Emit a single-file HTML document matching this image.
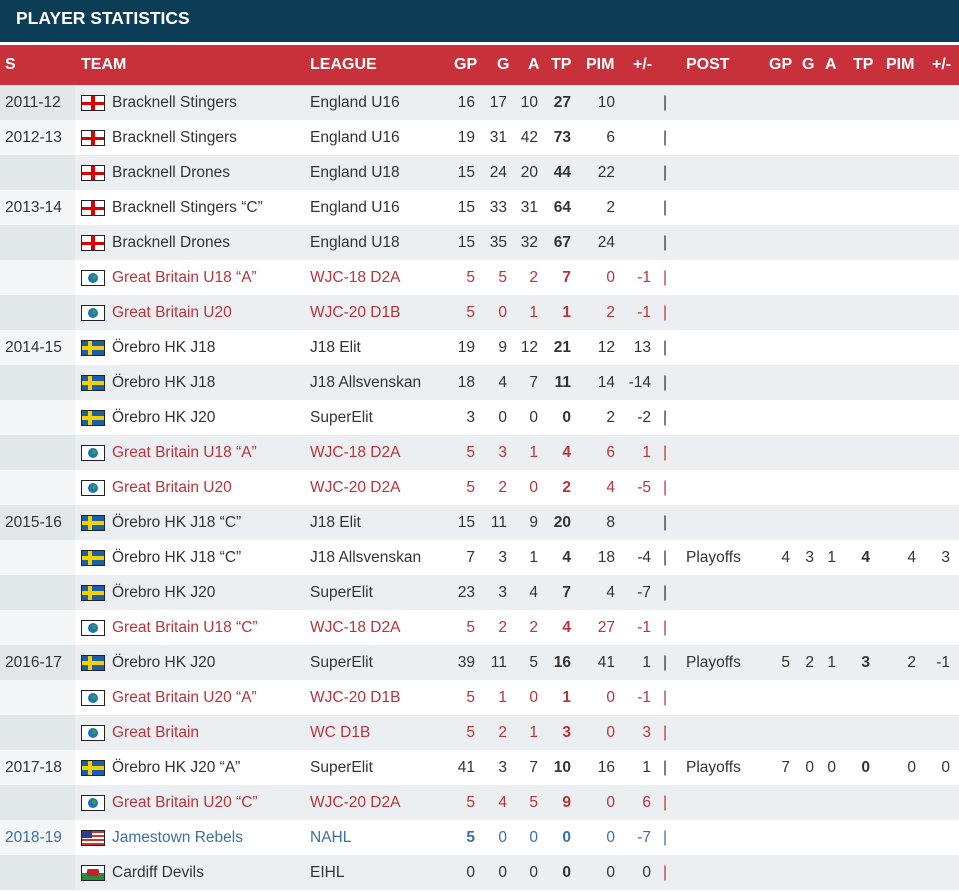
<!DOCTYPE html>
<html><head><meta charset="utf-8"><style>
*{margin:0;padding:0;box-sizing:border-box}
body{width:959px;height:878px;overflow:hidden;background:#fff;font-family:"Liberation Sans",sans-serif;font-size:15.5px;color:#333}
.top{height:42px;background:#0b3d56;color:#fff;font-weight:bold;font-size:17.5px;padding-left:16px;line-height:36px}
.hd{position:absolute;top:45px;left:0;width:959px;height:40px;background:#c8313a;color:#fff;font-weight:bold;font-size:16px}
.hd span{position:absolute;top:0;line-height:40px}
.r{position:absolute;left:0;width:959px;height:35px;line-height:36px}
.r span{position:absolute;top:0;white-space:nowrap}
.g{background:#ebeff2}.g .s{background:#e2e7ea}
.w{background:#fff}.w .s{background:#f4f5f6}
.s{left:0!important;width:75px;height:35px;padding-left:5px}
.t{left:112px}.l{left:310px}
.a{right:484px}.b{right:452px}.c{right:421px}.d{right:388px;font-weight:bold}.e{right:344px}.h{right:308px}.p{left:663px}
.po{left:686px}.pa{right:169px}.pb{right:145px}.pc{right:123px}.pd{right:89px;font-weight:bold}.pe{right:43px}.ph{right:9px}
.fl{position:absolute;left:81px;top:10px;width:24px;height:16px;border:1px solid #222;overflow:hidden}
.en{background:linear-gradient(#fff 6px,#d00 6px,#d00 9px,#fff 9px)}
.en:after{content:"";position:absolute;left:9px;top:0;width:4px;height:14px;background:#d00}
.se{background:#1b5fa8}
.se:before{content:"";position:absolute;left:0;top:5px;width:22px;height:4px;background:#f5d100}
.se:after{content:"";position:absolute;left:6px;top:0;width:4px;height:14px;background:#f5d100}
.wo{background:#fff}
.wo:after{content:"";position:absolute;left:6px;top:2px;width:10px;height:10px;border-radius:50%;background:radial-gradient(circle at 60% 40%,#3a9a4a 25%,#1e72c0 30%)}
.us{background:repeating-linear-gradient(#c33 0 2px,#fff 2px 4px)}
.us:after{content:"";position:absolute;left:0;top:0;width:10px;height:7px;background:#2c3f8a}
.wa{background:linear-gradient(#fff 7px,#2a8c3a 7px)}
.wa:after{content:"";position:absolute;left:5px;top:3px;width:12px;height:7px;background:#c8202a;border-radius:2px}
.red,.red span{color:#b9343b}.blu,.blu span{color:#3d6fa3}
</style></head><body>
<div class="top">PLAYER STATISTICS</div>
<div class="hd">
<span style="left:5px">S</span><span style="left:81px">TEAM</span><span style="left:310px">LEAGUE</span>
<span style="left:454px">GP</span><span style="left:497px">G</span><span style="left:528px">A</span><span style="left:551px">TP</span><span style="left:586px">PIM</span><span style="left:633px">+/-</span>
<span style="left:686px">POST</span><span style="left:769px">GP</span><span style="left:802px">G</span><span style="left:825px">A</span><span style="left:853px">TP</span><span style="left:886px">PIM</span><span style="left:932px">+/-</span>
</div>

<div class="r g" style="top:85px"><span class="s">2011-12</span><i class="fl en"></i><span class="t">Bracknell Stingers</span><span class="l">England U16</span><span class="a">16</span><span class="b">17</span><span class="c">10</span><span class="d">27</span><span class="e">10</span><span class="h"></span><span class="p">|</span></div>
<div class="r w" style="top:120px"><span class="s">2012-13</span><i class="fl en"></i><span class="t">Bracknell Stingers</span><span class="l">England U16</span><span class="a">19</span><span class="b">31</span><span class="c">42</span><span class="d">73</span><span class="e">6</span><span class="p">|</span></div>
<div class="r g" style="top:155px"><span class="s"></span><i class="fl en"></i><span class="t">Bracknell Drones</span><span class="l">England U18</span><span class="a">15</span><span class="b">24</span><span class="c">20</span><span class="d">44</span><span class="e">22</span><span class="p">|</span></div>
<div class="r w" style="top:190px"><span class="s">2013-14</span><i class="fl en"></i><span class="t">Bracknell Stingers “C”</span><span class="l">England U16</span><span class="a">15</span><span class="b">33</span><span class="c">31</span><span class="d">64</span><span class="e">2</span><span class="p">|</span></div>
<div class="r g" style="top:225px"><span class="s"></span><i class="fl en"></i><span class="t">Bracknell Drones</span><span class="l">England U18</span><span class="a">15</span><span class="b">35</span><span class="c">32</span><span class="d">67</span><span class="e">24</span><span class="p">|</span></div>
<div class="r w red" style="top:260px"><span class="s"></span><i class="fl wo"></i><span class="t">Great Britain U18 “A”</span><span class="l">WJC-18 D2A</span><span class="a">5</span><span class="b">5</span><span class="c">2</span><span class="d">7</span><span class="e">0</span><span class="h">-1</span><span class="p">|</span></div>
<div class="r g red" style="top:295px"><span class="s"></span><i class="fl wo"></i><span class="t">Great Britain U20</span><span class="l">WJC-20 D1B</span><span class="a">5</span><span class="b">0</span><span class="c">1</span><span class="d">1</span><span class="e">2</span><span class="h">-1</span><span class="p">|</span></div>
<div class="r w" style="top:330px"><span class="s">2014-15</span><i class="fl se"></i><span class="t">Örebro HK J18</span><span class="l">J18 Elit</span><span class="a">19</span><span class="b">9</span><span class="c">12</span><span class="d">21</span><span class="e">12</span><span class="h">13</span><span class="p">|</span></div>
<div class="r g" style="top:365px"><span class="s"></span><i class="fl se"></i><span class="t">Örebro HK J18</span><span class="l">J18 Allsvenskan</span><span class="a">18</span><span class="b">4</span><span class="c">7</span><span class="d">11</span><span class="e">14</span><span class="h">-14</span><span class="p">|</span></div>
<div class="r w" style="top:400px"><span class="s"></span><i class="fl se"></i><span class="t">Örebro HK J20</span><span class="l">SuperElit</span><span class="a">3</span><span class="b">0</span><span class="c">0</span><span class="d">0</span><span class="e">2</span><span class="h">-2</span><span class="p">|</span></div>
<div class="r g red" style="top:435px"><span class="s"></span><i class="fl wo"></i><span class="t">Great Britain U18 “A”</span><span class="l">WJC-18 D2A</span><span class="a">5</span><span class="b">3</span><span class="c">1</span><span class="d">4</span><span class="e">6</span><span class="h">1</span><span class="p">|</span></div>
<div class="r w red" style="top:470px"><span class="s"></span><i class="fl wo"></i><span class="t">Great Britain U20</span><span class="l">WJC-20 D2A</span><span class="a">5</span><span class="b">2</span><span class="c">0</span><span class="d">2</span><span class="e">4</span><span class="h">-5</span><span class="p">|</span></div>
<div class="r g" style="top:505px"><span class="s">2015-16</span><i class="fl se"></i><span class="t">Örebro HK J18 “C”</span><span class="l">J18 Elit</span><span class="a">15</span><span class="b">11</span><span class="c">9</span><span class="d">20</span><span class="e">8</span><span class="p">|</span></div>
<div class="r w" style="top:540px"><span class="s"></span><i class="fl se"></i><span class="t">Örebro HK J18 “C”</span><span class="l">J18 Allsvenskan</span><span class="a">7</span><span class="b">3</span><span class="c">1</span><span class="d">4</span><span class="e">18</span><span class="h">-4</span><span class="p">|</span><span class="po">Playoffs</span><span class="pa">4</span><span class="pb">3</span><span class="pc">1</span><span class="pd">4</span><span class="pe">4</span><span class="ph">3</span></div>
<div class="r g" style="top:575px"><span class="s"></span><i class="fl se"></i><span class="t">Örebro HK J20</span><span class="l">SuperElit</span><span class="a">23</span><span class="b">3</span><span class="c">4</span><span class="d">7</span><span class="e">4</span><span class="h">-7</span><span class="p">|</span></div>
<div class="r w red" style="top:610px"><span class="s"></span><i class="fl wo"></i><span class="t">Great Britain U18 “C”</span><span class="l">WJC-18 D2A</span><span class="a">5</span><span class="b">2</span><span class="c">2</span><span class="d">4</span><span class="e">27</span><span class="h">-1</span><span class="p">|</span></div>
<div class="r g" style="top:645px"><span class="s">2016-17</span><i class="fl se"></i><span class="t">Örebro HK J20</span><span class="l">SuperElit</span><span class="a">39</span><span class="b">11</span><span class="c">5</span><span class="d">16</span><span class="e">41</span><span class="h">1</span><span class="p">|</span><span class="po">Playoffs</span><span class="pa">5</span><span class="pb">2</span><span class="pc">1</span><span class="pd">3</span><span class="pe">2</span><span class="ph">-1</span></div>
<div class="r w red" style="top:680px"><span class="s"></span><i class="fl wo"></i><span class="t">Great Britain U20 “A”</span><span class="l">WJC-20 D1B</span><span class="a">5</span><span class="b">1</span><span class="c">0</span><span class="d">1</span><span class="e">0</span><span class="h">-1</span><span class="p">|</span></div>
<div class="r g red" style="top:715px"><span class="s"></span><i class="fl wo"></i><span class="t">Great Britain</span><span class="l">WC D1B</span><span class="a">5</span><span class="b">2</span><span class="c">1</span><span class="d">3</span><span class="e">0</span><span class="h">3</span><span class="p">|</span></div>
<div class="r w" style="top:750px"><span class="s">2017-18</span><i class="fl se"></i><span class="t">Örebro HK J20 “A”</span><span class="l">SuperElit</span><span class="a">41</span><span class="b">3</span><span class="c">7</span><span class="d">10</span><span class="e">16</span><span class="h">1</span><span class="p">|</span><span class="po">Playoffs</span><span class="pa">7</span><span class="pb">0</span><span class="pc">0</span><span class="pd">0</span><span class="pe">0</span><span class="ph">0</span></div>
<div class="r g red" style="top:785px"><span class="s"></span><i class="fl wo"></i><span class="t">Great Britain U20 “C”</span><span class="l">WJC-20 D2A</span><span class="a">5</span><span class="b">4</span><span class="c">5</span><span class="d">9</span><span class="e">0</span><span class="h">6</span><span class="p">|</span></div>
<div class="r w blu" style="top:820px"><span class="s">2018-19</span><i class="fl us"></i><span class="t">Jamestown Rebels</span><span class="l">NAHL</span><span class="a" style="font-weight:bold">5</span><span class="b">0</span><span class="c">0</span><span class="d">0</span><span class="e">0</span><span class="h">-7</span><span class="p">|</span></div>
<div class="r g" style="top:855px"><span class="s"></span><i class="fl wa"></i><span class="t">Cardiff Devils</span><span class="l">EIHL</span><span class="a">0</span><span class="b">0</span><span class="c">0</span><span class="d">0</span><span class="e">0</span><span class="h">0</span><span class="p" style="color:#b9343b">|</span></div>
</body></html>
